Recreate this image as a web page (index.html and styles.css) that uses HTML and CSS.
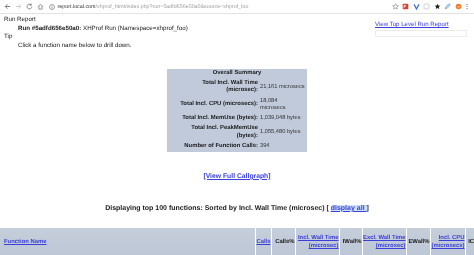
FILE: index.html
```html
<!DOCTYPE html>
<html>
<head>
<meta charset="utf-8">
<link rel="stylesheet" href="styles.css">
</head>
<body>
<div class="chrome">
  <div class="nav">
    <svg class="ico" width="7" height="7" viewBox="0 0 8 8"><path d="M7 4H1.5M4 1.5L1.5 4 4 6.5" stroke="#6d6d6d" stroke-width="1" fill="none"/></svg>
    <svg class="ico" width="7" height="7" viewBox="0 0 8 8"><path d="M1 4h5.5M4 1.5L6.5 4 4 6.5" stroke="#c8c8c8" stroke-width="1" fill="none"/></svg>
    <svg class="ico" width="7" height="7" viewBox="0 0 8 8"><path d="M6.6 4.2A2.7 2.7 0 1 1 5.7 2M6 0.8v1.7H4.3" stroke="#6d6d6d" stroke-width="0.9" fill="none"/></svg>
    <svg class="ico" width="7" height="7" viewBox="0 0 8 8"><path d="M1.2 4.2L4 1.4 6.8 4.2M2.2 3.4V7h3.6V3.4" stroke="#6d6d6d" stroke-width="0.8" fill="none"/></svg>
  </div>
  <div class="url">
    <svg width="6" height="6" viewBox="0 0 8 8"><circle cx="4" cy="4" r="3.3" stroke="#666" stroke-width="0.8" fill="none"/><path d="M4 3.5v2.5M4 2v0.8" stroke="#666" stroke-width="0.9"/></svg>
    <span class="urltext"><span class="host">report.local.com</span><span class="path">/xhprof_html/index.php?run=5adfd656e50a0&amp;source=xhprof_foo</span></span>
  </div>
  <div class="exts">
    <svg width="7" height="7" viewBox="0 0 10 10"><path d="M5 1l1.2 2.6 2.8.3-2.1 1.9.6 2.8L5 7.2 2.5 8.6l.6-2.8L1 3.9l2.8-.3z" stroke="#777" stroke-width="0.8" fill="none"/></svg>
    <svg width="7" height="7" viewBox="0 0 10 10"><rect x="1" y="1" width="8" height="8" rx="1" fill="#d9432f"/><path d="M3 7V3.5h2.5M3 5h2" stroke="#fff" stroke-width="1" fill="none"/></svg>
    <svg width="7" height="7" viewBox="0 0 10 10"><path d="M1.5 2L5 8.5 8.5 2" stroke="#3b6fd1" stroke-width="1.8" fill="none"/></svg>
    <svg width="7" height="7" viewBox="0 0 10 10"><rect x="1.5" y="1.5" width="7" height="7" rx="1" stroke="#bbb" stroke-width="0.9" fill="none"/></svg>
    <svg width="7" height="7" viewBox="0 0 10 10"><path d="M5 1l1.2 2.6 2.8.3-2.1 1.9.6 2.8L5 7.2 2.5 8.6l.6-2.8L1 3.9l2.8-.3z" fill="#222"/></svg>
    <svg width="7" height="7" viewBox="0 0 10 10"><path d="M1.5 8.5C2.5 4.5 5 2 8.8 1.2 8.2 5 5.5 7.5 1.5 8.5z" fill="#bcd4f3" stroke="#5b92dd" stroke-width="0.8"/></svg>
    <svg width="7" height="7" viewBox="0 0 10 10"><circle cx="5" cy="5" r="4" fill="#ef7d2d"/><path d="M3.5 5.5h3" stroke="#fff" stroke-width="1"/></svg>
    <svg width="4" height="7" viewBox="0 0 4 10"><circle cx="2" cy="2" r="0.8" fill="#666"/><circle cx="2" cy="5" r="0.8" fill="#666"/><circle cx="2" cy="8" r="0.8" fill="#666"/></svg>
  </div>
</div>
<div class="page">
  <div class="header">
    <div class="left">
      <div class="line">Run Report</div>
      <div class="line indent"><b>Run #5adfd656e50a0:</b> XHProf Run (Namespace=xhprof_foo)</div>
      <div class="line">Tip</div>
      <div class="line indent">Click a function name below to drill down.</div>
    </div>
    <div class="right">
      <a href="#" class="toplink">View Top Level Run Report</a>
      <div class="box"></div>
    </div>
  </div>

  <div class="summary-wrap">
    <table class="summary">
      <tr class="title-row"><th colspan="2" class="title">Overall Summary</th></tr>
      <tr><td class="key">Total Incl. Wall Time<br>(microsec):</td><td class="val">21,161 microsecs</td></tr>
      <tr><td class="key">Total Incl. CPU (microsecs):</td><td class="val">18,084<br>microsecs</td></tr>
      <tr><td class="key">Total Incl. MemUse (bytes):</td><td class="val">1,039,048 bytes</td></tr>
      <tr><td class="key">Total Incl. PeakMemUse<br>(bytes):</td><td class="val">1,055,480 bytes</td></tr>
      <tr><td class="key">Number of Function Calls:</td><td class="val">394</td></tr>
    </table>
  </div>

  <div class="callgraph"><a href="#">[View Full Callgraph]</a></div>

  <h3 class="display">Displaying top 100 functions: Sorted by Incl. Wall Time (microsec) [ <a href="#" class="hl">display all </a>]</h3>

  <table class="funcs">
    <tr>
      <th class="fname"><a href="#">Function Name</a></th>
      <th class="c-calls"><a href="#">Calls</a></th>
      <th class="c-callsp">Calls%</th>
      <th class="c-iwall"><a href="#">Incl. Wall Time<br>(microsec)</a></th>
      <th class="c-iwallp">IWall%</th>
      <th class="c-ewall"><a href="#">Excl. Wall Time<br>(microsec)</a></th>
      <th class="c-ewallp">EWall%</th>
      <th class="c-icpu"><a href="#">Incl. CPU<br>(microsecs)</a></th>
      <th class="c-icpup">ICpu%</th>
    </tr>
  </table>
</div>
</body>
</html>
```
FILE: styles.css
```css
html, body {
  margin: 0;
  padding: 0;
  width: 474px;
  height: 255px;
  overflow: hidden;
  background: #fff;
  font-family: "Liberation Sans", Arial, sans-serif;
  color: #1a1a1a;
  text-rendering: geometricPrecision;
}
.chrome {
  height: 13px;
  display: flex;
  align-items: center;
  background: #fff;
  border-bottom: 1px solid #e2e2e2;
  will-change: transform;
}
.nav {
  display: flex;
  gap: 4px;
  padding-left: 4px;
  align-items: center;
}
.url {
  display: flex;
  align-items: center;
  gap: 2.5px;
  margin-left: 5px;
  font-size: 5.35px;
  white-space: nowrap;
  flex: 1;
}
.host { color: #303030; }
.path { color: #9a9a9a; }
.exts {
  display: flex;
  align-items: center;
  gap: 3.5px;
  padding-right: 5px;
}

.page {
  padding: 0 4px;
  font-size: 6.2px;
  will-change: transform;
}
.header {
  display: flex;
  justify-content: space-between;
  margin-top: 1.5px;
}
.line {
  line-height: 8.5px;
  white-space: nowrap;
  color: #1a1a1a;
}
.indent { padding-left: 14px; }
.right {
  display: flex;
  flex-direction: column;
  padding-top: 5px;
  width: 92px;
  margin-right: 3px;
}
a { color: #3b41d8; }
.toplink { font-size: 6.1px; line-height: 7px; }
.box {
  height: 5px;
  border: 1px solid #ececec;
  margin-top: 2px;
}
.summary-wrap {
  display: flex;
  justify-content: center;
  margin-top: 18.5px;
}
.summary {
  background: #c1cadb;
  border-collapse: collapse;
  width: 140px;
  font-size: 5.9px;
}
.summary td, .summary th {
  padding: 1.4px 1px;
  line-height: 7.4px;
}
.summary .title-row th {
  text-align: center;
  font-weight: bold;
}
.summary .key { text-align: right; font-weight: bold; width: 90px; color: #1a1a1a; }
.summary .val { text-align: left; color: #333; font-size: 5.7px; white-space: nowrap; }
.callgraph {
  text-align: center;
  margin-top: 21px;
  font-size: 6.8px;
  font-weight: bold;
  line-height: 8px;
}
.display {
  text-align: center;
  font-size: 7px;
  line-height: 8px;
  margin: 24px 0 0;
  color: #1a1a1a;
}
.hl { background: #cfe1f7; }
.funcs {
  margin-top: 15px;
  margin-left: -5px;
  border-collapse: separate;
  border-spacing: 1px 0;
  table-layout: fixed;
  width: 489px;
  background: #fff;
  font-size: 5.9px;
}
.funcs th {
  box-sizing: border-box;
  background: linear-gradient(#c6cedb, #bdc6d6);
  height: 29px;
  padding: 0 0.5px 0 0;
  text-align: right;
  vertical-align: middle;
  line-height: 8.3px;
  white-space: nowrap;
  overflow: hidden;
  color: #1a1a1a;
}
.funcs th.fname { text-align: left; width: 255px; padding-left: 4px; }
.c-calls { width: 15px; }
.c-callsp { width: 23px; }
.c-iwall { width: 43px; }
.c-iwallp { width: 22px; }
.c-ewall { width: 43px; }
.c-ewallp { width: 23px; }
.c-icpu { width: 34px; }
.c-icpup { width: 21px; }
```
